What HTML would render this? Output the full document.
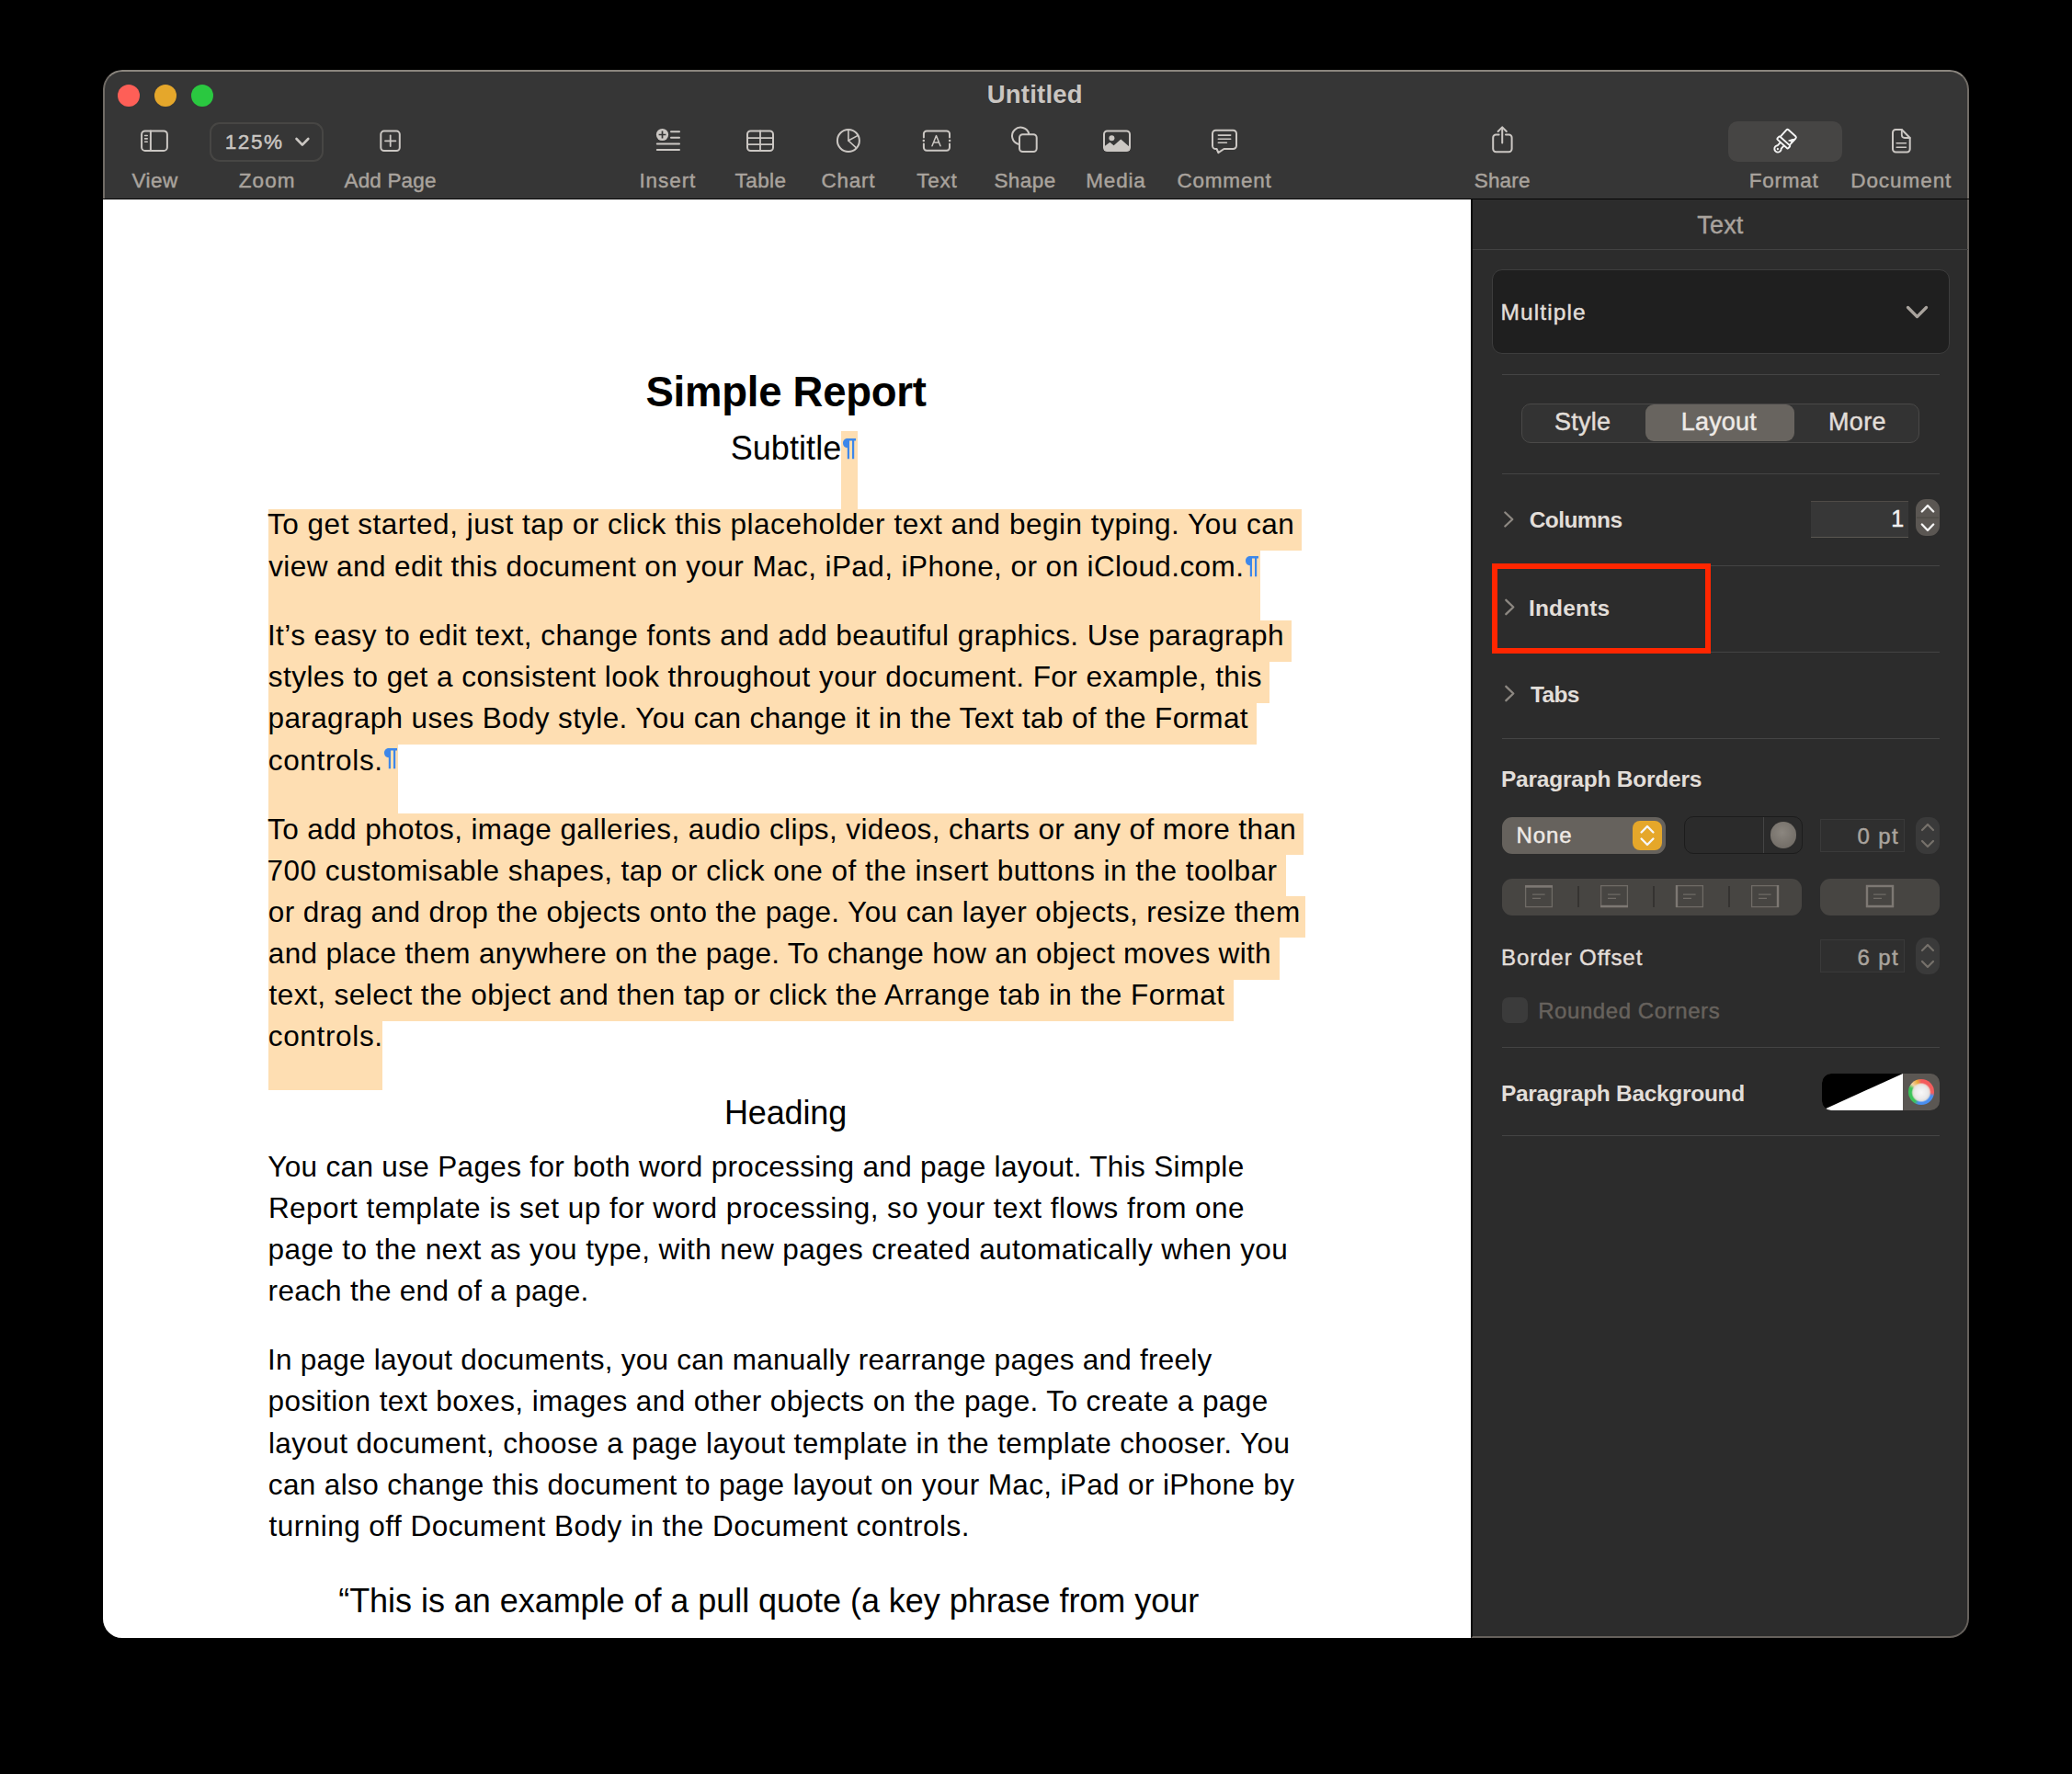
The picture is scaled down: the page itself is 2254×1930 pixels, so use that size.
<!DOCTYPE html>
<html><head><meta charset="utf-8">
<style>
*{box-sizing:border-box;margin:0;padding:0}
html,body{width:2254px;height:1930px;background:#000;overflow:hidden;font-family:"Liberation Sans",sans-serif}
.abs{position:absolute}
#win{position:absolute;left:112px;top:76px;width:2030px;height:1706px;border-radius:21px;overflow:hidden;background:#2b2b2b}
#toolbar{position:absolute;left:0;top:0;width:2030px;height:140px;background:#363636;border:2px solid #716c66;border-top-color:#8a857e;border-bottom:none;border-radius:21px 21px 0 0}
#tbline{position:absolute;left:0;top:140px;width:2030px;height:1px;background:#050505}
#doc{position:absolute;left:0;top:141px;width:1488px;height:1565px;background:#fff;overflow:hidden}
#docin{position:absolute;left:-112px;top:-217px;width:2254px;height:1930px}
#panel{position:absolute;left:1488px;top:141px;width:542px;height:1565px;background:#2c2c2c;border-left:2px solid #0a0a0a;border-right:2px solid #66615c;border-bottom:2px solid #66615c;border-radius:0 0 21px 0}
.t{position:absolute;white-space:pre;line-height:1}
.hl{position:absolute;background:#fedeb2}
.sep{position:absolute;left:1634px;width:476px;height:1px;background:#444}
</style></head><body>
<div id="win">
  <div id="toolbar">
    <div class="abs" style="left:14px;top:14px;width:24px;height:24px;border-radius:50%;background:#fe5f57"></div>
    <div class="abs" style="left:54px;top:14px;width:24px;height:24px;border-radius:50%;background:#e5a72b"></div>
    <div class="abs" style="left:94px;top:14px;width:24px;height:24px;border-radius:50%;background:#2ac840"></div>
  </div>
  <div id="tbline"></div>
  <div id="doc"><div id="docin">
<div class="hl" style="left:292px;top:554px;width:1124px;height:45px"></div>
<div class="hl" style="left:292px;top:599px;width:1079px;height:76px"></div>
<div class="hl" style="left:292px;top:675px;width:1113px;height:45px"></div>
<div class="hl" style="left:292px;top:720px;width:1089px;height:45px"></div>
<div class="hl" style="left:292px;top:765px;width:1075px;height:45px"></div>
<div class="hl" style="left:292px;top:810px;width:141px;height:75px"></div>
<div class="hl" style="left:292px;top:885px;width:1126px;height:45px"></div>
<div class="hl" style="left:292px;top:930px;width:1107px;height:45px"></div>
<div class="hl" style="left:292px;top:975px;width:1128px;height:45px"></div>
<div class="hl" style="left:292px;top:1020px;width:1100px;height:46px"></div>
<div class="hl" style="left:292px;top:1066px;width:1050px;height:45px"></div>
<div class="hl" style="left:292px;top:1111px;width:124px;height:75px"></div>
<div class="hl" style="left:915px;top:469px;width:18px;height:85px"></div>
<div class="t" style="left:291.0px;top:555.3px;font-size:31.5px;font-weight:400;letter-spacing:0.521px;color:#000">To get started, just tap or click this placeholder text and begin typing. You can</div>
<div class="t" style="left:292.2px;top:601.0px;font-size:31.5px;font-weight:400;letter-spacing:0.415px;color:#000">view and edit this document on your Mac, iPad, iPhone, or on iCloud.com.</div>
<div class="t" style="left:290.9px;top:676.1px;font-size:31.5px;font-weight:400;letter-spacing:0.448px;color:#000">It’s easy to edit text, change fonts and add beautiful graphics. Use paragraph</div>
<div class="t" style="left:291.8px;top:721.2px;font-size:31.5px;font-weight:400;letter-spacing:0.455px;color:#000">styles to get a consistent look throughout your document. For example, this</div>
<div class="t" style="left:291.6px;top:766.4px;font-size:31.5px;font-weight:400;letter-spacing:0.362px;color:#000">paragraph uses Body style. You can change it in the Text tab of the Format</div>
<div class="t" style="left:291.8px;top:811.5px;font-size:31.5px;font-weight:400;letter-spacing:0.650px;color:#000">controls.</div>
<div class="t" style="left:291.0px;top:886.7px;font-size:31.5px;font-weight:400;letter-spacing:0.404px;color:#000">To add photos, image galleries, audio clips, videos, charts or any of more than</div>
<div class="t" style="left:290.5px;top:931.8px;font-size:31.5px;font-weight:400;letter-spacing:0.486px;color:#000">700 customisable shapes, tap or click one of the insert buttons in the toolbar</div>
<div class="t" style="left:291.8px;top:977.0px;font-size:31.5px;font-weight:400;letter-spacing:0.408px;color:#000">or drag and drop the objects onto the page. You can layer objects, resize them</div>
<div class="t" style="left:291.8px;top:1022.1px;font-size:31.5px;font-weight:400;letter-spacing:0.331px;color:#000">and place them anywhere on the page. To change how an object moves with</div>
<div class="t" style="left:292.5px;top:1067.3px;font-size:31.5px;font-weight:400;letter-spacing:0.466px;color:#000">text, select the object and then tap or click the Arrange tab in the Format</div>
<div class="t" style="left:291.8px;top:1112.4px;font-size:31.5px;font-weight:400;letter-spacing:0.650px;color:#000">controls.</div>
<div class="t" style="left:291.2px;top:1253.5px;font-size:31.5px;font-weight:400;letter-spacing:0.337px;color:#000">You can use Pages for both word processing and page layout. This Simple</div>
<div class="t" style="left:291.9px;top:1298.6px;font-size:31.5px;font-weight:400;letter-spacing:0.466px;color:#000">Report template is set up for word processing, so your text flows from one</div>
<div class="t" style="left:291.6px;top:1343.8px;font-size:31.5px;font-weight:400;letter-spacing:0.389px;color:#000">page to the next as you type, with new pages created automatically when you</div>
<div class="t" style="left:291.6px;top:1389.0px;font-size:31.5px;font-weight:400;letter-spacing:0.309px;color:#000">reach the end of a page.</div>
<div class="t" style="left:290.9px;top:1464.3px;font-size:31.5px;font-weight:400;letter-spacing:0.250px;color:#000">In page layout documents, you can manually rearrange pages and freely</div>
<div class="t" style="left:291.6px;top:1509.4px;font-size:31.5px;font-weight:400;letter-spacing:0.412px;color:#000">position text boxes, images and other objects on the page. To create a page</div>
<div class="t" style="left:291.9px;top:1554.6px;font-size:31.5px;font-weight:400;letter-spacing:0.389px;color:#000">layout document, choose a page layout template in the template chooser. You</div>
<div class="t" style="left:291.8px;top:1599.8px;font-size:31.5px;font-weight:400;letter-spacing:0.365px;color:#000">can also change this document to page layout on your Mac, iPad or iPhone by</div>
<div class="t" style="left:292.5px;top:1644.9px;font-size:31.5px;font-weight:400;letter-spacing:0.472px;color:#000">turning off Document Body in the Document controls.</div>
<div class="t" style="left:702.5px;top:404.2px;font-size:45.5px;font-weight:700;letter-spacing:-0.250px;color:#000">Simple Report</div>
<div class="t" style="left:794.7px;top:469.9px;font-size:36px;font-weight:400;letter-spacing:0.071px;color:#000">Subtitle</div>
<div class="t" style="left:787.9px;top:1193.0px;font-size:36px;font-weight:400;letter-spacing:-0.133px;color:#000">Heading</div>
<div class="t" style="left:368.2px;top:1724.0px;font-size:36px;font-weight:400;letter-spacing:-0.043px;color:#000">“This is an example of a pull quote (a key phrase from your</div>
<div class="abs" style="left:1355px;top:604.6px;width:14px;height:23px"><svg width="14" height="23" viewBox="0 0 14 23"><path fill="#3d87ea" d="M2.2 0H14V2.4H12.2V22.3H10V2.4H7V22.3H4.8V10.2C2 10.2 0 8 0 5.1 0 2.2 2 0 4.8 0Z"/></svg></div>
<div class="abs" style="left:418px;top:814.4px;width:14px;height:23px"><svg width="14" height="23" viewBox="0 0 14 23"><path fill="#3d87ea" d="M2.2 0H14V2.4H12.2V22.3H10V2.4H7V22.3H4.8V10.2C2 10.2 0 8 0 5.1 0 2.2 2 0 4.8 0Z"/></svg></div>
<div class="abs" style="left:917px;top:477px;width:14px;height:23px"><svg width="14" height="23" viewBox="0 0 14 23"><path fill="#3d87ea" d="M2.2 0H14V2.4H12.2V22.3H10V2.4H7V22.3H4.8V10.2C2 10.2 0 8 0 5.1 0 2.2 2 0 4.8 0Z"/></svg></div>
  </div></div>
  <div id="panel"></div>
</div>

<!-- toolbar widgets -->
<div class="abs" style="left:228px;top:132.5px;width:124px;height:43px;border-radius:11px;border:2px solid #474644"></div>
<div class="abs" style="left:1880px;top:132px;width:124px;height:44px;border-radius:10px;background:#464544"></div>

<svg class="abs" style="left:0;top:0" width="2254" height="260" viewBox="0 0 2254 260">
 <g fill="none" stroke="#cbc7c3" stroke-width="2" stroke-linecap="round" stroke-linejoin="round">
  <!-- view -->
  <rect x="154.1" y="142.4" width="27.8" height="21.6" rx="3.8"/>
  <line x1="163.9" y1="142.4" x2="163.9" y2="164"/>
  <g stroke-width="1.6"><line x1="157.6" y1="147.5" x2="160.2" y2="147.5"/><line x1="157.6" y1="150.9" x2="160.2" y2="150.9"/><line x1="157.6" y1="154.2" x2="160.2" y2="154.2"/></g>
  <!-- zoom chevron -->
  <polyline points="322.5,151 328.9,157.6 335.3,151" stroke-width="2.6"/>
  <!-- add page -->
  <rect x="414.3" y="142.6" width="20.5" height="21.5" rx="3.5"/>
  <line x1="424.7" y1="147.5" x2="424.7" y2="159" stroke-width="1.8"/>
  <line x1="419" y1="153.3" x2="430.4" y2="153.3" stroke-width="1.8"/>
  <!-- insert -->
  <line x1="730" y1="143.3" x2="739" y2="143.3"/>
  <line x1="730" y1="149.8" x2="739" y2="149.8"/>
  <line x1="714.8" y1="156.5" x2="739" y2="156.5"/>
  <line x1="714.8" y1="163" x2="739" y2="163"/>
  <!-- table -->
  <rect x="813" y="142.4" width="28" height="21.7" rx="3.5"/>
  <line x1="813" y1="150.2" x2="841" y2="150.2" stroke-width="1.8"/>
  <line x1="813" y1="157.2" x2="841" y2="157.2" stroke-width="1.8"/>
  <line x1="827" y1="142.4" x2="827" y2="164" stroke-width="1.8"/>
  <!-- chart -->
  <circle cx="922.9" cy="153" r="12"/>
  <polyline points="922.9,141.5 922.9,153 932.8,147.6" stroke-width="1.6"/>
  <line x1="922.9" y1="153" x2="931.2" y2="160.6" stroke-width="1.6"/>
  <!-- text -->
  <path d="M1004.9 149.5V145.6a3.2 3.2 0 0 1 3.2-3.2H1029.8a3.2 3.2 0 0 1 3.2 3.2V149.5M1004.9 156.6V160.5a3.2 3.2 0 0 0 3.2 3.2H1029.8a3.2 3.2 0 0 0 3.2-3.2V156.6"/>
  <path d="M1014 158.8L1018.5 147.6L1023 158.8M1015.6 155H1021.4" stroke-width="1.5"/>
  <!-- shape -->
  <path d="M1107.6 156.8A9.3 9.3 0 1 1 1119.3 145.4"/>
  <rect x="1109" y="146.3" width="18.7" height="18.8" rx="3.5"/>
  <!-- media -->
  <rect x="1201" y="142.4" width="28" height="21.7" rx="3.5"/>
  <!-- comment -->
  <path d="M1323.6 162H1322.6a3.6 3.6 0 0 1-3.6-3.6V145.3a3.6 3.6 0 0 1 3.6-3.6H1341.4a3.6 3.6 0 0 1 3.6 3.6V158.4a3.6 3.6 0 0 1-3.6 3.6H1331.5L1325.3 166.2Z"/>
  <g stroke-width="1.6"><line x1="1325.3" y1="147.1" x2="1338.7" y2="147.1"/><line x1="1325.3" y1="151.2" x2="1338.7" y2="151.2"/><line x1="1325.3" y1="155.3" x2="1334.4" y2="155.3"/></g>
  <!-- share -->
  <path d="M1630.6 146.6H1627.4a3.2 3.2 0 0 0-3.2 3.2V162a3.2 3.2 0 0 0 3.2 3.2H1641.4a3.2 3.2 0 0 0 3.2-3.2V149.8a3.2 3.2 0 0 0-3.2-3.2H1638"/>
  <line x1="1634.2" y1="138.8" x2="1634.2" y2="155.5"/>
  <polyline points="1629.6,143 1634.2,138.4 1638.8,143"/>
  <!-- document -->
  <path d="M2068.8 141H2062.2a3.2 3.2 0 0 0-3.2 3.2V162.3a3.2 3.2 0 0 0 3.2 3.2H2074.5a3.2 3.2 0 0 0 3.2-3.2V150Z"/>
  <path d="M2068.8 141V146.8a3.2 3.2 0 0 0 3.2 3.2H2077.7" stroke-width="1.8"/>
  <g stroke-width="1.6"><line x1="2063.2" y1="155.8" x2="2073.4" y2="155.8"/><line x1="2063.2" y1="160.2" x2="2073.4" y2="160.2"/></g>
 </g>
 <circle cx="1004.8" cy="153" r="1.25" fill="#cbc7c3"/><circle cx="1033.1" cy="153" r="1.25" fill="#cbc7c3"/>
 <!-- insert circle -->
 <circle cx="720.5" cy="146.5" r="6.6" fill="#cbc7c3"/>
 <path d="M720.5 142.6V150.4M716.6 146.5H724.4" stroke="#363636" stroke-width="1.7"/>
 <!-- media fill -->
 <circle cx="1209.4" cy="150.3" r="3" fill="#cbc7c3"/>
 <path d="M1201 164.1V159.5L1207.4 154.8L1211.6 158.3L1219.3 151.6L1229 159.9V164.1Z" fill="#cbc7c3"/>
 <!-- brush -->
 <g transform="translate(1940.6 154.6) rotate(42)" fill="none" stroke="#f4f4f4" stroke-width="1.9" stroke-linejoin="round">
   <path d="M-6.8 -1.6V-11.6a1.6 1.6 0 0 1 1.6-1.6H5.2a1.6 1.6 0 0 1 1.6 1.6V-1.6"/>
   <rect x="-8" y="-1.6" width="16" height="4.2" rx="1"/>
   <path d="M-2.6 2.6V7.2A3.7 3.7 0 1 0 2.6 7.2V2.6"/>
   <circle cx="0" cy="10" r="1.15" fill="#f4f4f4" stroke="none"/>
   <path d="M6.8 -10.5V-5.6Q4.6 -6.2 2.8 -4.6Q4.2 -8.2 6.8 -10.5Z" fill="#f4f4f4" stroke-width="1"/>
 </g>
</svg>

<!-- panel widgets -->
<div class="abs" style="left:1602px;top:270.5px;width:539px;height:1px;background:#424242"></div>
<div class="abs" style="left:1623px;top:292.5px;width:498px;height:92.5px;border-radius:11px;background:#1f1f1f;border:1.5px solid #3d3d3d"></div>
<svg class="abs" style="left:2070px;top:328px" width="32" height="24" viewBox="0 0 32 24"><polyline points="5.5,6.5 15.5,16.6 25.5,6.5" fill="none" stroke="#a9a39d" stroke-width="3.3" stroke-linecap="round" stroke-linejoin="round"/></svg>
<div class="sep" style="top:406.5px"></div>
<div class="abs" style="left:1654.5px;top:438.5px;width:433px;height:43px;border-radius:10px;background:#333333;border:1.5px solid #4a4948"></div>
<div class="abs" style="left:1790px;top:440px;width:162px;height:40px;border-radius:9px;background:#68645f"></div>
<div class="sep" style="top:514.5px"></div>
<svg class="abs" style="left:1630px;top:550px" width="24" height="30" viewBox="0 0 24 30"><polyline points="7.3,7.5 15.3,15 7.3,22.5" fill="none" stroke="#8d8882" stroke-width="2.3" stroke-linecap="round" stroke-linejoin="round"/></svg>
<div class="abs" style="left:1970px;top:545px;width:106px;height:40px;background:#373737;border-top:1px solid #4f4b47;border-bottom:1px solid #5c5853"></div>
<div class="abs" style="left:2084px;top:542.7px;width:26px;height:40.4px;border-radius:11px;background:#5b5753"></div>
<svg class="abs" style="left:2084px;top:542px" width="26" height="42" viewBox="0 0 26 42"><g fill="none" stroke="#f4f4f4" stroke-width="2.4" stroke-linecap="round" stroke-linejoin="round"><polyline points="6.8,14.5 13,8 19.2,14.5"/><polyline points="6.8,28.5 13,35 19.2,28.5"/></g><line x1="1" y1="21.2" x2="25" y2="21.2" stroke="#4a4743" stroke-width="1"/></svg>
<div class="sep" style="top:614.5px"></div>
<svg class="abs" style="left:1630px;top:646px" width="24" height="30" viewBox="0 0 24 30"><polyline points="8.3,6.8 16.3,14.5 8.3,22.2" fill="none" stroke="#8d8882" stroke-width="2.3" stroke-linecap="round" stroke-linejoin="round"/></svg>
<div class="sep" style="top:708.5px"></div>
<svg class="abs" style="left:1630px;top:740px" width="24" height="30" viewBox="0 0 24 30"><polyline points="8.3,6.8 16.3,14.5 8.3,22.2" fill="none" stroke="#8d8882" stroke-width="2.3" stroke-linecap="round" stroke-linejoin="round"/></svg>
<div class="sep" style="top:802.5px"></div>

<!-- paragraph borders controls -->
<div class="abs" style="left:1634px;top:889px;width:178px;height:40px;border-radius:11px;background:#66625d"></div>
<div class="abs" style="left:1776px;top:893px;width:32px;height:32px;border-radius:8px;background:#e5a72a"></div>
<svg class="abs" style="left:1776px;top:893px" width="32" height="32" viewBox="0 0 32 32"><g fill="none" stroke="#f6f6f6" stroke-width="2.4" stroke-linecap="round" stroke-linejoin="round"><polyline points="9.6,12.5 16,6 22.4,12.5"/><polyline points="9.6,19.5 16,26 22.4,19.5"/></g></svg>
<div class="abs" style="left:1831.5px;top:888px;width:129px;height:40.5px;border-radius:10px;background:#2b2b2b;border:1px solid #1c1c1c"></div>
<div class="abs" style="left:1918px;top:889px;width:1px;height:39px;background:#454545"></div>
<div class="abs" style="left:1925.8px;top:894px;width:28.5px;height:28.5px;border-radius:50%;background:radial-gradient(circle at 45% 40%,#8b867f,#6a655f)"></div>
<div class="abs" style="left:1980px;top:891px;width:92px;height:35.5px;background:#2f2f2f;border:1px solid #3a3a3a"></div>
<div class="abs" style="left:2084px;top:889px;width:26px;height:40px;border-radius:11px;background:#3a3a3a"></div>
<svg class="abs" style="left:2084px;top:889px" width="26" height="40" viewBox="0 0 26 40"><g fill="none" stroke="#76716b" stroke-width="2.2" stroke-linecap="round" stroke-linejoin="round"><polyline points="7,14 13,8 19,14"/><polyline points="7,26 13,32 19,26"/></g></svg>

<div class="abs" style="left:1634px;top:956px;width:326px;height:40px;border-radius:11px;background:#474542"></div>
<div class="abs" style="left:1980px;top:956px;width:130px;height:40px;border-radius:11px;background:#474542"></div>
<svg class="abs" style="left:1634px;top:956px" width="476" height="40" viewBox="0 0 476 40">
 <g fill="none" stroke="#6f6b66" stroke-width="1.3">
  <rect x="25.6" y="7.6" width="28.8" height="23"/>
  <rect x="107.6" y="7.6" width="28.8" height="23"/>
  <rect x="189.6" y="7.6" width="28.8" height="23"/>
  <rect x="271.6" y="7.6" width="28.8" height="23"/>
  <rect x="396.6" y="7.6" width="28.8" height="23"/>
  <path d="M33 17.1H46.6M33 21.3H42M115 17.1H128.6M115 21.3H124M197 17.1H210.6M197 21.3H206M279 17.1H292.6M279 21.3H288M404 17.1H417.6M404 21.3H413"/>
 </g>
 <g stroke="#7d7873" stroke-width="2.4"><line x1="25" y1="8.5" x2="55" y2="8.5"/><line x1="107" y1="30" x2="137" y2="30"/><line x1="190" y1="7" x2="190" y2="31"/><line x1="300" y1="7" x2="300" y2="31"/><rect x="397" y="8" width="28" height="22" fill="none"/></g>
 <g stroke="#2f2e2d" stroke-width="1.5"><line x1="83" y1="8" x2="83" y2="31"/><line x1="165" y1="8" x2="165" y2="31"/><line x1="247" y1="8" x2="247" y2="31"/></g>
</svg>

<div class="abs" style="left:1980px;top:1022px;width:92px;height:35.5px;background:#2f2f2f;border:1px solid #3a3a3a"></div>
<div class="abs" style="left:2084px;top:1020px;width:26px;height:40px;border-radius:11px;background:#3a3a3a"></div>
<svg class="abs" style="left:2084px;top:1020px" width="26" height="40" viewBox="0 0 26 40"><g fill="none" stroke="#76716b" stroke-width="2.2" stroke-linecap="round" stroke-linejoin="round"><polyline points="7,14 13,8 19,14"/><polyline points="7,26 13,32 19,26"/></g></svg>
<div class="abs" style="left:1634.3px;top:1085.3px;width:27.5px;height:27.5px;border-radius:7px;background:#3b3b3b"></div>
<div class="sep" style="top:1138.5px"></div>
<div class="abs" style="left:1982px;top:1168px;width:128px;height:40px;border-radius:10px;background:#5b5753;overflow:hidden">
  <svg width="88" height="40" viewBox="0 0 88 40" style="position:absolute;left:0;top:0"><rect width="88" height="40" fill="#000"/><path d="M0 40L88 0V40Z" fill="#fff"/></svg>
  <div class="abs" style="left:94px;top:6px;width:28px;height:28px;border-radius:50%;background:conic-gradient(from 0deg,#f45b5b 0deg,#f25e5e 95deg,#4a8ff0 110deg,#4a8ff0 195deg,#3cc45a 215deg,#3cc45a 290deg,#f3d2a6 310deg,#e9a83a 340deg,#f45b5b 360deg)"></div>
  <div class="abs" style="left:94px;top:6px;width:28px;height:28px;border-radius:50%;background:radial-gradient(circle closest-side at 50% 52%,#f8f8f8 0,#e8e8e8 55%,rgba(232,226,218,0.9) 68%,rgba(235,235,235,0) 80%)"></div>
</div>
<div class="sep" style="top:1234.5px"></div>

<div class="t" style="left:143.5px;top:186.0px;font-size:22.5px;font-weight:400;letter-spacing:0.500px;color:#a9a39d;-webkit-text-stroke:0.45px #a9a39d">View</div>
<div class="t" style="left:259.8px;top:186.0px;font-size:22.5px;font-weight:400;letter-spacing:1.067px;color:#a9a39d;-webkit-text-stroke:0.45px #a9a39d">Zoom</div>
<div class="t" style="left:374.5px;top:186.0px;font-size:22.5px;font-weight:400;letter-spacing:0.157px;color:#a9a39d;-webkit-text-stroke:0.45px #a9a39d">Add Page</div>
<div class="t" style="left:695.4px;top:186.0px;font-size:22.5px;font-weight:400;letter-spacing:0.940px;color:#a9a39d;-webkit-text-stroke:0.45px #a9a39d">Insert</div>
<div class="t" style="left:799.6px;top:186.0px;font-size:22.5px;font-weight:400;letter-spacing:0.400px;color:#a9a39d;-webkit-text-stroke:0.45px #a9a39d">Table</div>
<div class="t" style="left:893.6px;top:186.0px;font-size:22.5px;font-weight:400;letter-spacing:0.700px;color:#a9a39d;-webkit-text-stroke:0.45px #a9a39d">Chart</div>
<div class="t" style="left:997.3px;top:186.0px;font-size:22.5px;font-weight:400;letter-spacing:0.700px;color:#a9a39d;-webkit-text-stroke:0.45px #a9a39d">Text</div>
<div class="t" style="left:1081.4px;top:186.0px;font-size:22.5px;font-weight:400;letter-spacing:0.425px;color:#a9a39d;-webkit-text-stroke:0.45px #a9a39d">Shape</div>
<div class="t" style="left:1181.2px;top:186.0px;font-size:22.5px;font-weight:400;letter-spacing:0.850px;color:#a9a39d;-webkit-text-stroke:0.45px #a9a39d">Media</div>
<div class="t" style="left:1280.5px;top:186.0px;font-size:22.5px;font-weight:400;letter-spacing:0.783px;color:#a9a39d;-webkit-text-stroke:0.45px #a9a39d">Comment</div>
<div class="t" style="left:1603.8px;top:186.0px;font-size:22.5px;font-weight:400;letter-spacing:0.150px;color:#a9a39d;-webkit-text-stroke:0.45px #a9a39d">Share</div>
<div class="t" style="left:1902.8px;top:186.0px;font-size:22.5px;font-weight:400;letter-spacing:0.720px;color:#a9a39d;-webkit-text-stroke:0.45px #a9a39d">Format</div>
<div class="t" style="left:2013.2px;top:186.0px;font-size:22.5px;font-weight:400;letter-spacing:0.943px;color:#a9a39d;-webkit-text-stroke:0.45px #a9a39d">Document</div>
<div class="t" style="left:1073.7px;top:88.9px;font-size:27.5px;font-weight:700;letter-spacing:0.229px;color:#cac6c2">Untitled</div>
<div class="t" style="left:244.7px;top:143.8px;font-size:22.5px;font-weight:400;letter-spacing:1.600px;color:#cac6c2;-webkit-text-stroke:0.45px #cac6c2">125%</div>
<div class="t" style="left:1846.3px;top:231.8px;font-size:27px;font-weight:400;letter-spacing:0.167px;color:#a9a39d;-webkit-text-stroke:0.45px #a9a39d">Text</div>
<div class="t" style="left:1632.6px;top:328.4px;font-size:24.5px;font-weight:400;letter-spacing:1.086px;color:#e2ded9;-webkit-text-stroke:0.45px #e2ded9">Multiple</div>
<div class="t" style="left:1691.0px;top:445.8px;font-size:27px;font-weight:400;letter-spacing:0.250px;color:#e2ded9;-webkit-text-stroke:0.45px #e2ded9">Style</div>
<div class="t" style="left:1828.8px;top:445.8px;font-size:27px;font-weight:400;letter-spacing:0.160px;color:#eeeae6;-webkit-text-stroke:0.45px #eeeae6">Layout</div>
<div class="t" style="left:1988.9px;top:445.8px;font-size:27px;font-weight:400;letter-spacing:0.400px;color:#e2ded9;-webkit-text-stroke:0.45px #e2ded9">More</div>
<div class="t" style="left:1663.7px;top:553.6px;font-size:24.5px;font-weight:700;letter-spacing:-0.567px;color:#e2ded9">Columns</div>
<div class="t" style="left:2057.2px;top:552.2px;font-size:25px;font-weight:400;letter-spacing:0.000px;color:#f2f2f2;-webkit-text-stroke:0.45px #f2f2f2">1</div>
<div class="t" style="left:1663.0px;top:649.6px;font-size:24.5px;font-weight:700;letter-spacing:0.167px;color:#e2ded9">Indents</div>
<div class="t" style="left:1665.0px;top:743.7px;font-size:24.5px;font-weight:700;letter-spacing:-0.667px;color:#e2ded9">Tabs</div>
<div class="t" style="left:1633.0px;top:836.4px;font-size:24.5px;font-weight:700;letter-spacing:-0.225px;color:#e2ded9">Paragraph Borders</div>
<div class="t" style="left:1649.4px;top:896.6px;font-size:24px;font-weight:400;letter-spacing:0.967px;color:#eeeae6;-webkit-text-stroke:0.45px #eeeae6">None</div>
<div class="t" style="left:2020.5px;top:897.9px;font-size:24px;font-weight:400;letter-spacing:1.400px;color:#aaa49e;-webkit-text-stroke:0.45px #aaa49e">0 pt</div>
<div class="t" style="left:1633.0px;top:1029.6px;font-size:24px;font-weight:400;letter-spacing:0.917px;color:#e2ded9;-webkit-text-stroke:0.45px #e2ded9">Border Offset</div>
<div class="t" style="left:2020.5px;top:1029.6px;font-size:24px;font-weight:400;letter-spacing:1.400px;color:#aaa49e;-webkit-text-stroke:0.45px #aaa49e">6 pt</div>
<div class="t" style="left:1673.2px;top:1087.9px;font-size:24px;font-weight:400;letter-spacing:0.571px;color:#67625d;-webkit-text-stroke:0.45px #67625d">Rounded Corners</div>
<div class="t" style="left:1633.0px;top:1177.7px;font-size:24.5px;font-weight:700;letter-spacing:-0.300px;color:#e2ded9">Paragraph Background</div>
<!-- red annotation box -->
<div class="abs" style="left:1622.8px;top:612.8px;width:238.4px;height:98.5px;border:6.3px solid #ff2600"></div>
</body></html>
